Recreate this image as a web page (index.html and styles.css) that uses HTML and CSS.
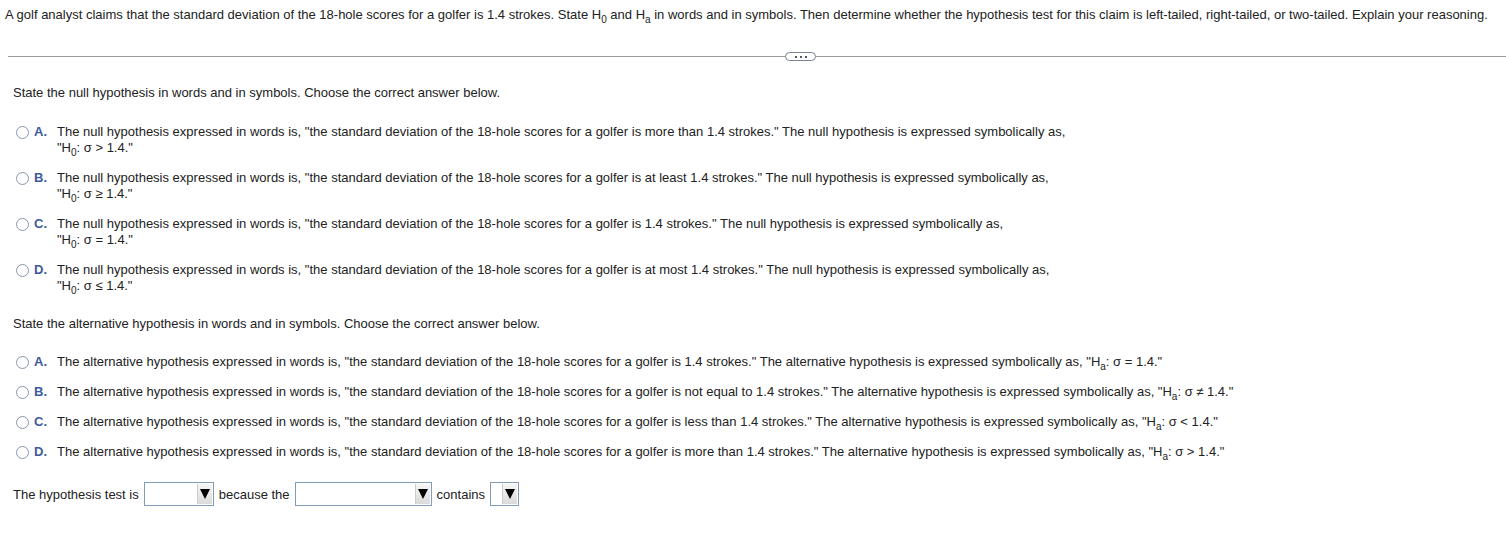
FILE: index.html
```html
<!DOCTYPE html>
<html>
<head>
<meta charset="utf-8">
<link rel="stylesheet" href="styles.css">
</head>
<body>
<div class="page">
  <p class="question">A golf analyst claims that the standard deviation of the 18-hole scores for a golfer is 1.4 strokes. State H<sub>0</sub> and H<sub>a</sub> in words and in symbols. Then determine whether the hypothesis test for this claim is left-tailed, right-tailed, or two-tailed. Explain your reasoning.</p>
  <div class="divider">
    <span class="more"><i></i><i></i><i></i></span>
  </div>
  <div class="answers">
    <p class="prompt">State the null hypothesis in words and in symbols. Choose the correct answer below.</p>
    <ul class="choices two-line">
      <li><span class="radio"></span><span class="letter">A.</span><span class="txt">The null hypothesis expressed in words is, "the standard deviation of the 18-hole scores for a golfer is more than 1.4 strokes." The null hypothesis is expressed symbolically as,<br>"H<sub>0</sub>: σ &gt; 1.4."</span></li>
      <li><span class="radio"></span><span class="letter">B.</span><span class="txt">The null hypothesis expressed in words is, "the standard deviation of the 18-hole scores for a golfer is at least 1.4 strokes." The null hypothesis is expressed symbolically as,<br>"H<sub>0</sub>: σ ≥ 1.4."</span></li>
      <li><span class="radio"></span><span class="letter">C.</span><span class="txt">The null hypothesis expressed in words is, "the standard deviation of the 18-hole scores for a golfer is 1.4 strokes." The null hypothesis is expressed symbolically as,<br>"H<sub>0</sub>: σ = 1.4."</span></li>
      <li><span class="radio"></span><span class="letter">D.</span><span class="txt">The null hypothesis expressed in words is, "the standard deviation of the 18-hole scores for a golfer is at most 1.4 strokes." The null hypothesis is expressed symbolically as,<br>"H<sub>0</sub>: σ ≤ 1.4."</span></li>
    </ul>
    <p class="prompt alt">State the alternative hypothesis in words and in symbols. Choose the correct answer below.</p>
    <ul class="choices one-line">
      <li><span class="radio"></span><span class="letter">A.</span><span class="txt">The alternative hypothesis expressed in words is, "the standard deviation of the 18-hole scores for a golfer is 1.4 strokes." The alternative hypothesis is expressed symbolically as, "H<sub>a</sub>: σ = 1.4."</span></li>
      <li><span class="radio"></span><span class="letter">B.</span><span class="txt">The alternative hypothesis expressed in words is, "the standard deviation of the 18-hole scores for a golfer is not equal to 1.4 strokes." The alternative hypothesis is expressed symbolically as, "H<sub>a</sub>: σ ≠ 1.4."</span></li>
      <li><span class="radio"></span><span class="letter">C.</span><span class="txt">The alternative hypothesis expressed in words is, "the standard deviation of the 18-hole scores for a golfer is less than 1.4 strokes." The alternative hypothesis is expressed symbolically as, "H<sub>a</sub>: σ &lt; 1.4."</span></li>
      <li><span class="radio"></span><span class="letter">D.</span><span class="txt">The alternative hypothesis expressed in words is, "the standard deviation of the 18-hole scores for a golfer is more than 1.4 strokes." The alternative hypothesis is expressed symbolically as, "H<sub>a</sub>: σ &gt; 1.4."</span></li>
    </ul>
    <div class="fill">
      <span>The hypothesis test is</span>
      <span class="drop w1"><span class="arrow"></span></span>
      <span>because the</span>
      <span class="drop w2"><span class="arrow"></span></span>
      <span>contains</span>
      <span class="drop w3"><span class="arrow"></span></span>
    </div>
  </div>
</div>
</body>
</html>
```
FILE: styles.css
```css
* { box-sizing: border-box; }
html, body { margin: 0; padding: 0; background: #fff; }
body {
  font-family: "Liberation Sans", Arial, sans-serif;
  font-size: 13px;
  color: #222;
}
p, ul { margin: 0; padding: 0; }
sub { font-size: 10px; vertical-align: -4px; line-height: 0; }
.page { padding: 0; }
.question { padding: 7px 0 0 5px; line-height: 15px; white-space: nowrap; }
.divider {
  margin: 34px 0 0 8px;
  height: 1px;
  background: #9a9a9a;
  position: relative;
}
.more {
  position: absolute;
  left: 777px;
  top: -4px;
  width: 31px;
  height: 9px;
  border: 1px solid #7b8494;
  border-radius: 5px;
  background: #fff;
  display: flex;
  justify-content: center;
  align-items: center;
  gap: 3px;
}
.more i { width: 2px; height: 2px; background: #4a5568; display: block; }
.answers { padding-left: 13px; }
.prompt { margin-top: 28px; line-height: 15px; }
.prompt.alt { margin-top: 22px; }
.choices { list-style: none; margin-top: 24px; }
.choices li { display: flex; align-items: flex-start; line-height: 16px; }
.two-line li + li { margin-top: 14px; }
.one-line { margin-top: 23px; }
.one-line li + li { margin-top: 14px; }
.radio {
  width: 13px; height: 13px;
  border: 1px solid #8796ad;
  border-radius: 50%;
  margin: 2px 5px 0 3px;
  flex: none;
}
.letter { color: #3d5a9e; font-weight: bold; width: 23px; flex: none; }
.txt { white-space: nowrap; }
.fill { margin-top: 22px; display: flex; align-items: center; gap: 5px; height: 24px; }
.drop {
  height: 24px;
  border: 1px solid #7f9db9;
  background: #fff;
  display: flex;
  justify-content: flex-end;
  align-items: center;
  padding-right: 1px;
}
.drop.w1 { width: 70px; }
.drop.w2 { width: 137px; }
.drop.w3 { width: 29px; }
.arrow {
  width: 15px; height: 20px;
  background: linear-gradient(#f6f6f6, #dadada);
  border-left: 1px solid #ccc;
  position: relative;
}
.arrow::after {
  content: "";
  position: absolute;
  left: 2px; top: 5px;
  border-left: 5px solid transparent;
  border-right: 5px solid transparent;
  border-top: 10px solid #000;
}
```
